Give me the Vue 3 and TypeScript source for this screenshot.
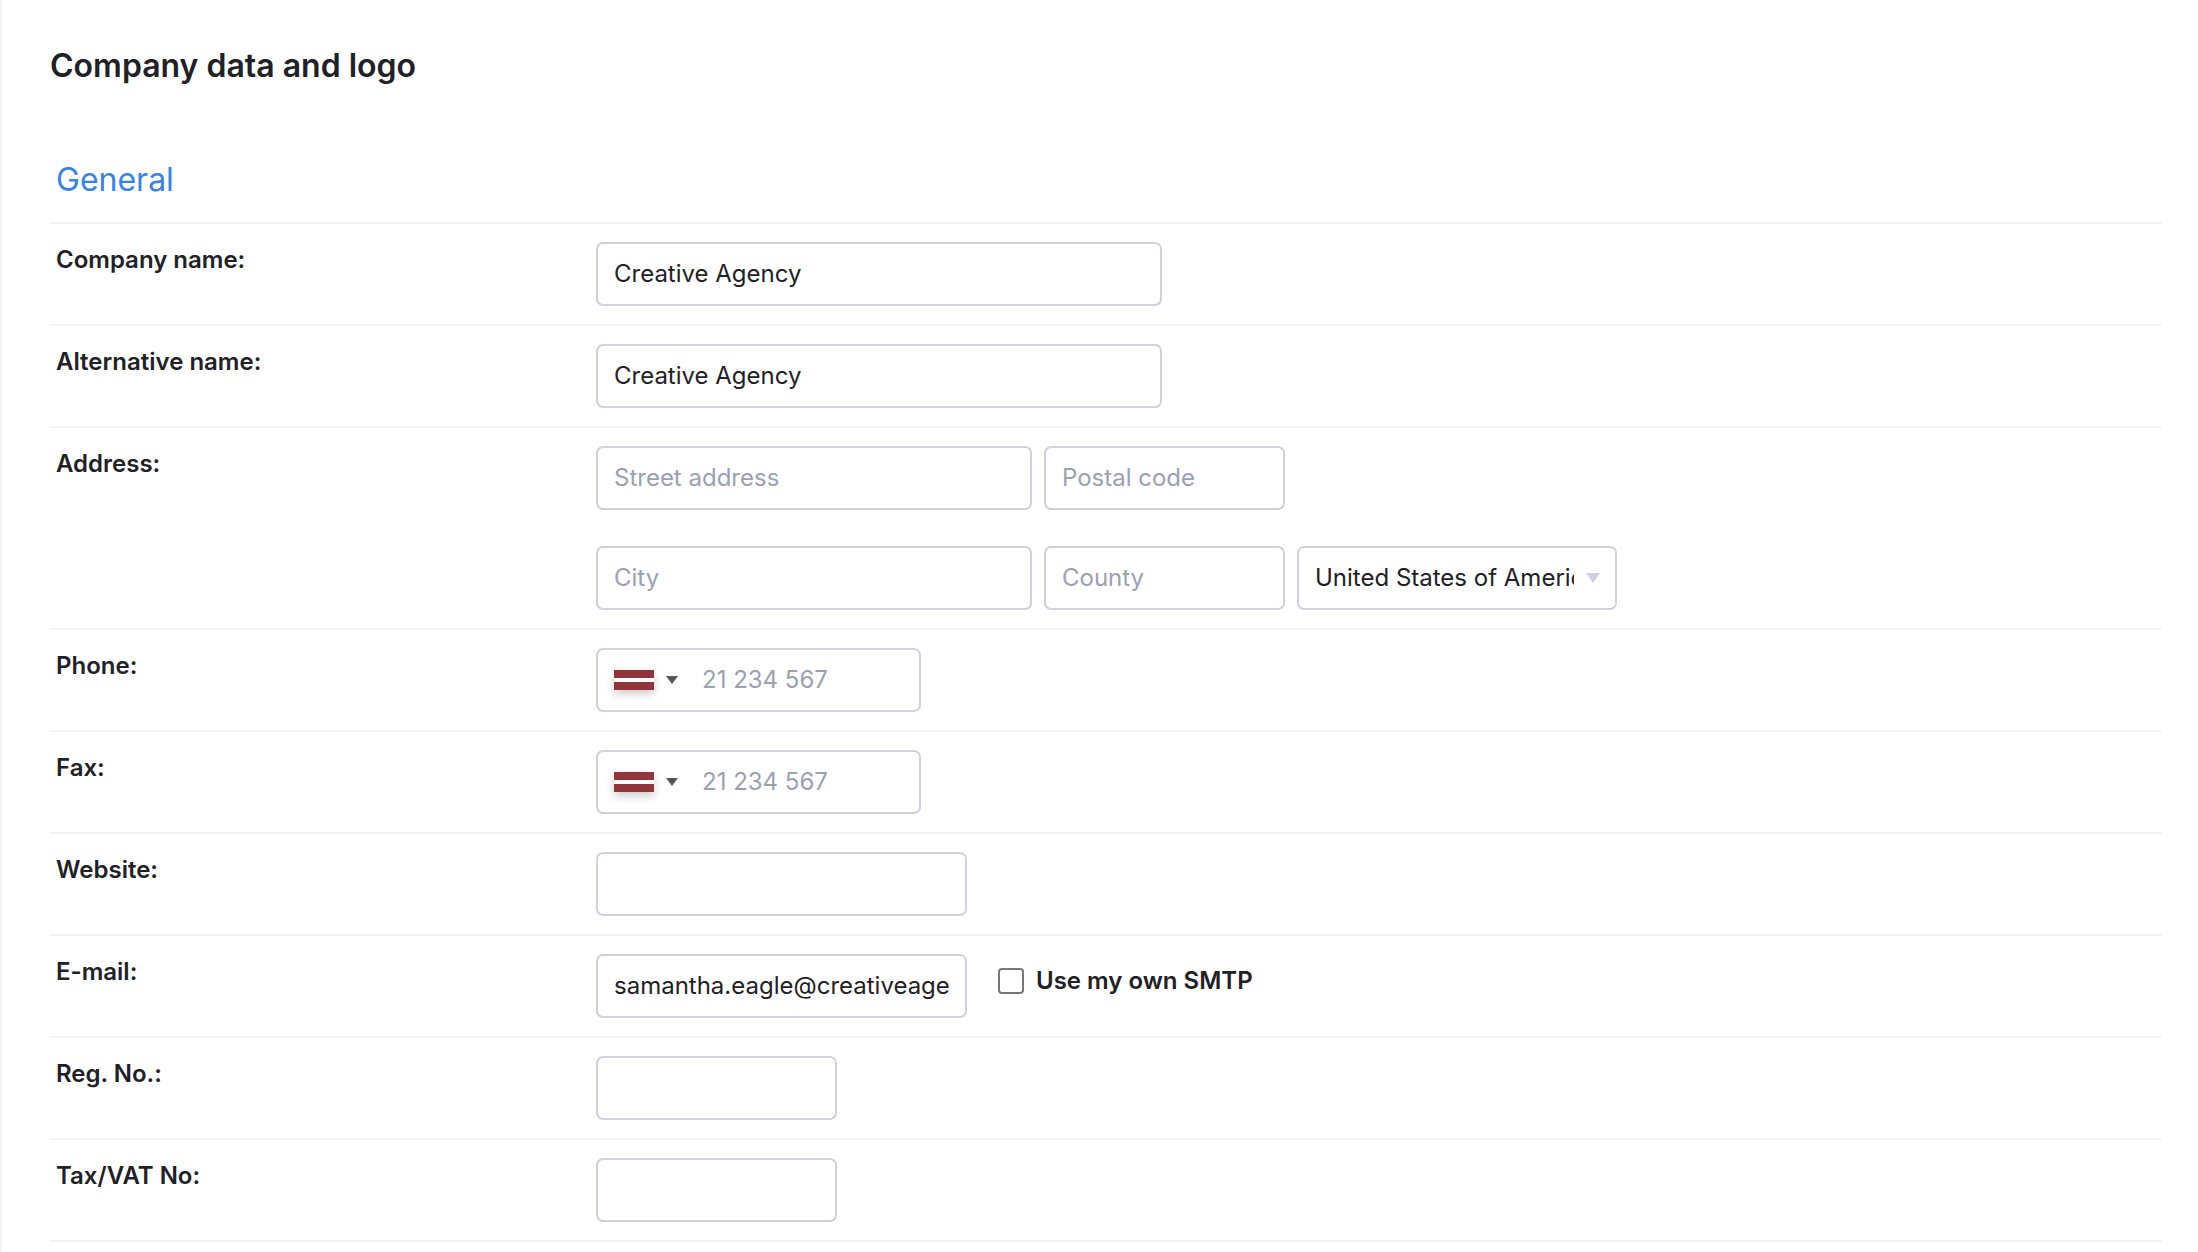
<template>
  <div class="page">
    <h1 class="title">Company data and logo</h1>
    <h2 class="section">General</h2>
    <div class="rows">
      <div class="row">
        <label class="label">Company name:</label>
        <div class="fields"><input class="input w-name" value="Creative Agency" /></div>
      </div>
      <div class="row">
        <label class="label">Alternative name:</label>
        <div class="fields"><input class="input w-name" value="Creative Agency" /></div>
      </div>
      <div class="row">
        <label class="label">Address:</label>
        <div class="fields stack">
          <div class="line">
            <input class="input w-street" placeholder="Street address" />
            <input class="input w-postal" placeholder="Postal code" />
          </div>
          <div class="line">
            <input class="input w-street" placeholder="City" />
            <input class="input w-postal" placeholder="County" />
            <div class="select">
              <span class="select-text">United States of America</span>
              <span class="select-arrow"></span>
            </div>
          </div>
        </div>
      </div>
      <div v-for="p in phones" :key="p" class="row">
        <label class="label">{{ p }}:</label>
        <div class="fields">
          <div class="phone">
            <span class="flag"><i></i></span>
            <span class="flag-arrow"></span>
            <input class="phone-input" placeholder="21 234 567" />
          </div>
        </div>
      </div>
      <div class="row">
        <label class="label">Website:</label>
        <div class="fields"><input class="input w-web" /></div>
      </div>
      <div class="row">
        <label class="label">E-mail:</label>
        <div class="fields">
          <input class="input w-web" value="samantha.eagle@creativeagency.com" />
          <div class="smtp">
            <span class="check"></span>
            <span class="smtp-text">Use my own SMTP</span>
          </div>
        </div>
      </div>
      <div class="row">
        <label class="label">Reg. No.:</label>
        <div class="fields"><input class="input w-reg" /></div>
      </div>
      <div class="row">
        <label class="label">Tax/VAT No:</label>
        <div class="fields"><input class="input w-reg" /></div>
      </div>
    </div>
  </div>
</template>

<script setup lang="ts">
const phones: string[] = ['Phone', 'Fax']
</script>

<style>
html, body { margin: 0; background: #fff; overflow: hidden; }
</style>

<style scoped>
.page {
  box-sizing: border-box;
  height: 1252px;
  overflow: hidden;
  padding: 0 36px 0 48px;
  border-left: 2px solid #f3f3f8;
  font-family: Inter, "Liberation Sans", sans-serif;
  color: #1f2126;
  background: #fff;
}
.title {
  margin: 0;
  padding-top: 46px;
  font-size: 32px;
  line-height: 40px;
  font-weight: 600;
  color: #1f2126;
}
.section {
  margin: 0;
  padding: 72px 0 0 6px;
  height: 64px;
  font-size: 32px;
  line-height: 44px;
  font-weight: 400;
  color: #3a83e0;
}
.rows { border-top: 2px solid #f3f3f8; }
.row {
  display: flex;
  box-sizing: border-box;
  height: 102px;
  padding: 18px 0;
  border-bottom: 2px solid #f3f3f8;
}
.row:nth-child(3) { height: 202px; }
.label {
  width: 540px;
  padding-left: 6px;
  padding-top: 2px;
  flex: none;
  font-size: 24px;
  line-height: 32px;
  font-weight: 600;
  color: #1f2126;
}
.fields { display: flex; }
.stack { flex-direction: column; gap: 36px; }
.line { display: flex; gap: 12px; }
.input, .select, .phone {
  box-sizing: border-box;
  height: 64px;
  border: 2px solid #cdd1e0;
  border-radius: 7px;
  background: #fff;
  font-family: inherit;
  font-size: 24px;
  color: #1f2126;
}
.input { padding: 0 16px 2px; outline: none; }
.input::placeholder, .phone-input::placeholder { color: #9aa1b1; opacity: 1; }
.w-name { width: 566px; }
.w-street { width: 436px; }
.w-postal { width: 241px; }
.w-web { width: 371px; }
.w-reg { width: 241px; }
.select {
  width: 320px;
  display: flex;
  align-items: center;
  padding: 0 16px 2px;
}
.select-text {
  width: 259px;
  flex: none;
  overflow: hidden;
  white-space: nowrap;
}
.select-arrow {
  margin-left: 12px;
  margin-top: 2px;
  border-left: 7px solid transparent;
  border-right: 7px solid transparent;
  border-top: 10px solid #cdd1e0;
}
.phone {
  width: 325px;
  display: flex;
  align-items: center;
  padding-left: 16px;
}
.flag {
  display: flex;
  align-items: center;
  width: 40px;
  height: 20px;
  background: #91343c;
  box-shadow: 0 4px 10px rgba(0, 0, 0, 0.2);
}
.flag i { display: block; width: 100%; height: 4px; background: #fff; }
.flag-arrow {
  margin-left: 12px;
  border-left: 6px solid transparent;
  border-right: 6px solid transparent;
  border-top: 8px solid #555;
}
.phone-input {
  width: 200px;
  margin-left: 24px;
  padding: 0 0 2px;
  border: 0;
  outline: none;
  font-family: inherit;
  font-size: 24px;
  color: #1f2126;
  background: transparent;
}
.smtp {
  display: flex;
  align-items: center;
  gap: 12px;
  height: 36px;
  margin-left: 31px;
  margin-top: 9px;
}
.check {
  box-sizing: border-box;
  width: 26px;
  height: 26px;
  border: 2px solid #767676;
  border-radius: 4px;
  background: #fff;
}
.smtp-text {
  font-size: 24px;
  font-weight: 600;
  line-height: 32px;
}
</style>
